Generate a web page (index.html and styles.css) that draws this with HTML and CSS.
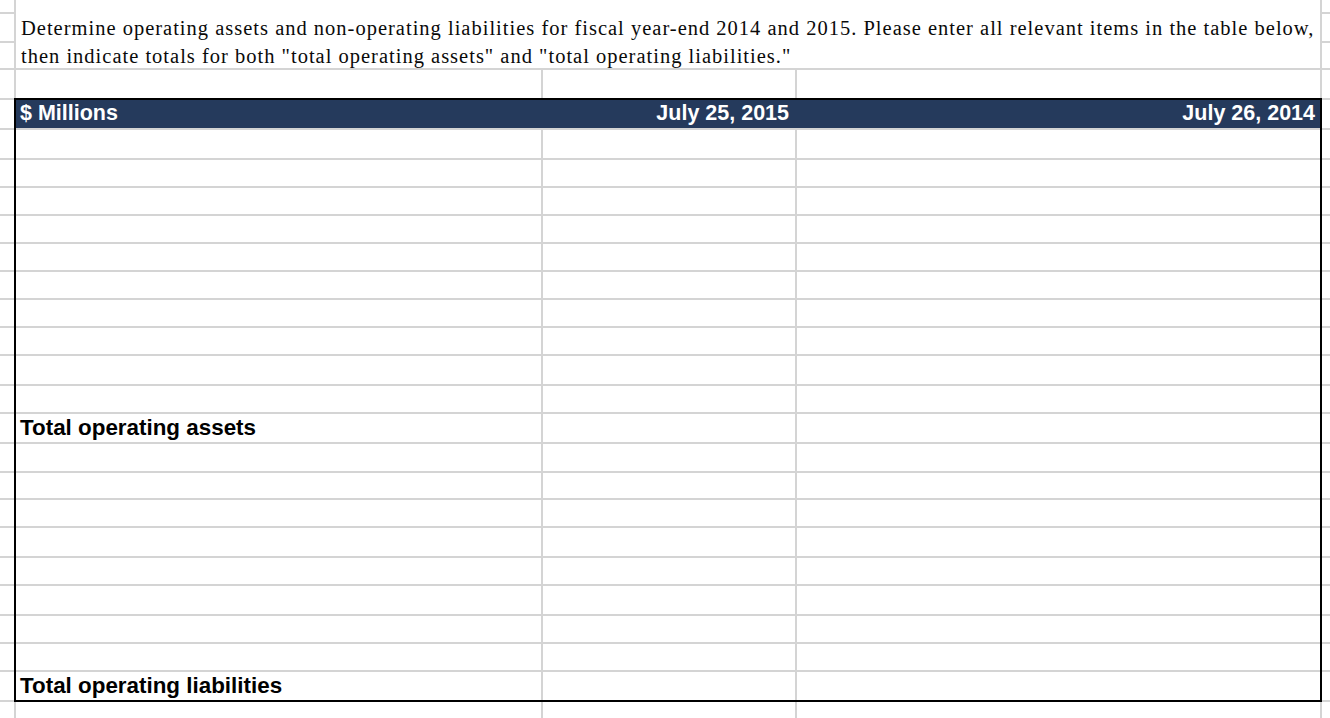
FILE: index.html
```html
<!DOCTYPE html>
<html lang="en">
<head>
<meta charset="utf-8">
<title>Operating assets and liabilities</title>
<link rel="stylesheet" href="styles.css">
</head>
<body>
<div class="sheet">
  <div class="note">Determine operating assets and non-operating liabilities for fiscal year-end 2014 and 2015. Please enter all relevant items in the table below,<br>then indicate totals for both "total operating assets" and "total operating liabilities."</div>

  <div class="table">
    <div class="h h-first">$ Millions</div>
    <div class="h h-mid">July 25, 2015</div>
    <div class="h h-last">July 26, 2014</div>

    <div class="c"></div><div class="c"></div><div class="c"></div>
    <div class="c"></div><div class="c"></div><div class="c"></div>
    <div class="c"></div><div class="c"></div><div class="c"></div>
    <div class="c"></div><div class="c"></div><div class="c"></div>
    <div class="c"></div><div class="c"></div><div class="c"></div>
    <div class="c"></div><div class="c"></div><div class="c"></div>
    <div class="c"></div><div class="c"></div><div class="c"></div>
    <div class="c"></div><div class="c"></div><div class="c"></div>
    <div class="c"></div><div class="c"></div><div class="c"></div>
    <div class="c"></div><div class="c"></div><div class="c"></div>

    <div class="c label">Total operating assets</div><div class="c"></div><div class="c"></div>

    <div class="c"></div><div class="c"></div><div class="c"></div>
    <div class="c"></div><div class="c"></div><div class="c"></div>
    <div class="c"></div><div class="c"></div><div class="c"></div>
    <div class="c"></div><div class="c"></div><div class="c"></div>
    <div class="c"></div><div class="c"></div><div class="c"></div>
    <div class="c"></div><div class="c"></div><div class="c"></div>
    <div class="c"></div><div class="c"></div><div class="c"></div>
    <div class="c"></div><div class="c"></div><div class="c"></div>

    <div class="c label">Total operating liabilities</div><div class="c"></div><div class="c"></div>
  </div>

  <!-- rows 1-3: column A and E -->
  <div class="c"></div><div class="c"></div>
  <div class="c"></div><div class="c"></div>
  <div class="c"></div><div class="c"></div>
  <!-- row 4: full row -->
  <div class="c"></div><div class="c"></div><div class="c"></div><div class="c"></div><div class="c"></div>
  <!-- rows 5-25: column A and E beside the table -->
  <div class="c"></div><div class="c"></div>
  <div class="c"></div><div class="c"></div>
  <div class="c"></div><div class="c"></div>
  <div class="c"></div><div class="c"></div>
  <div class="c"></div><div class="c"></div>
  <div class="c"></div><div class="c"></div>
  <div class="c"></div><div class="c"></div>
  <div class="c"></div><div class="c"></div>
  <div class="c"></div><div class="c"></div>
  <div class="c"></div><div class="c"></div>
  <div class="c"></div><div class="c"></div>
  <div class="c"></div><div class="c"></div>
  <div class="c"></div><div class="c"></div>
  <div class="c"></div><div class="c"></div>
  <div class="c"></div><div class="c"></div>
  <div class="c"></div><div class="c"></div>
  <div class="c"></div><div class="c"></div>
  <div class="c"></div><div class="c"></div>
  <div class="c"></div><div class="c"></div>
  <div class="c"></div><div class="c"></div>
  <div class="c"></div><div class="c"></div>
  <!-- row 26: full row -->
  <div class="c"></div><div class="c"></div><div class="c"></div><div class="c"></div><div class="c"></div>
</div>
</body>
</html>
```

FILE: styles.css
```css
html, body {
  margin: 0;
  padding: 0;
  background: #ffffff;
  overflow: hidden;
}

.sheet {
  --grid: #d4d4d4;
  --rows: 28px 28px repeat(7, 26px) 28px 26px 28px 27px 25px 26px 28px 26px 28px 26px 26px 28px;
  display: grid;
  grid-template-columns: 14px 525px 252px 523px 1fr;
  grid-template-rows: 12px 27px 25px 28px var(--rows) 16px;
  gap: 2px;
  background: var(--grid);
  width: 1330px;
  height: 718px;
}

.c {
  background: #ffffff;
  min-width: 0;
}

.note {
  grid-column: 2 / 5;
  grid-row: 1 / 4;
  background: #ffffff;
  padding: 14px 0 0 5px;
  font-family: "Liberation Serif", "Times New Roman", serif;
  font-size: 20.5px;
  letter-spacing: 1px;
  line-height: 28px;
  color: #0a0a0a;
  white-space: nowrap;
}

.table {
  grid-column: 2 / 5;
  grid-row: 5 / 26;
  margin: -2px;
  border: 2px solid #000000;
  display: grid;
  grid-template-columns: 525px 252px 523px;
  grid-template-rows: var(--rows);
  gap: 2px;
  background: var(--grid);
}

.h {
  background: #253a5c;
  color: #ffffff;
  font-family: "Liberation Sans", Arial, Helvetica, sans-serif;
  font-weight: bold;
  font-size: 21.5px;
  line-height: 27px;
  white-space: nowrap;
}

.h-first {
  margin-right: -2px;
  padding-left: 4px;
}

.h-mid {
  margin-right: -2px;
  text-align: right;
  padding-right: 8px;
}

.h-last {
  text-align: right;
  padding-right: 5px;
}

.label {
  font-family: "Liberation Sans", Arial, Helvetica, sans-serif;
  font-weight: bold;
  font-size: 22.4px;
  line-height: 27px;
  color: #000000;
  padding-left: 4px;
  white-space: nowrap;
}
```
